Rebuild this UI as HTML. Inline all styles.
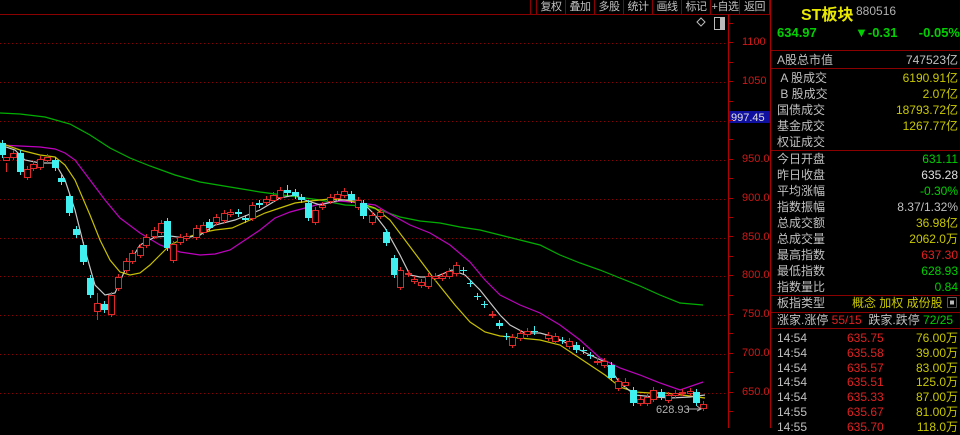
<!DOCTYPE html>
<html><head><meta charset="utf-8"><style>
*{margin:0;padding:0;box-sizing:border-box}
body{width:960px;height:428px;background:#000;overflow:hidden;position:relative;font-family:"Liberation Sans","Noto Sans CJK SC",sans-serif;font-size:12px}
.tb{position:absolute;top:0;height:15px;border-right:1px solid #8b0000;color:#c0c0c0;font-size:11px;line-height:14px;text-align:center;white-space:nowrap;overflow:hidden;letter-spacing:-0.5px}
.ax{position:absolute;left:742px;color:#d01818;font-size:11px}
.p{position:absolute;left:770px;top:0;width:190px;height:428px;border-left:1px solid #a00}
.r{position:absolute;left:6px;right:2px;height:16px;line-height:16px;color:#c0c0c0;white-space:nowrap}
.r .v{position:absolute;right:0;top:0}
.sep{position:absolute;left:0;right:0;border-top:1px solid #8b0000}
.y{color:#c8c800}.g{color:#00d000}.rd{color:#e02020}.w{color:#e0e0e0}
</style></head><body>
<svg width="960" height="428" style="position:absolute;left:0;top:0" id="s">
<line x1="0" y1="14.5" x2="770" y2="14.5" stroke="#8b0000"/>
<line x1="728.5" y1="14" x2="728.5" y2="428" stroke="#b00000"/>
<g id="grid" stroke="#8b0000" stroke-dasharray="1,3"></g>
<g id="lines" fill="none" stroke-width="1.2"></g>
<g id="c"></g>
<rect x="729" y="111" width="41" height="12" fill="#1010a0"/>
<text x="731" y="121" fill="#e0e0e0" font-size="11" font-family="Liberation Sans">997.45</text>
<text x="656" y="413" fill="#b0b0b0" font-size="11" font-family="Liberation Sans">628.93</text>
<line x1="688" y1="409" x2="700" y2="409" stroke="#b0b0b0"/><path d="M697,406 L701,409 L697,411" stroke="#b0b0b0" fill="none"/>
<path d="M697,22 l4,-4 l4,4 l-4,4z" stroke="#bbb" fill="none"/>
<rect x="714.5" y="17.5" width="10" height="12" stroke="#bbb" fill="none"/><rect x="720" y="18" width="4" height="11" fill="#bbb"/>
</svg>
<div class="tb" style="left:530px;width:7px;border-left:1px solid #8b0000"></div>
<div class="tb" style="left:537px;width:29px">复权</div>
<div class="tb" style="left:566px;width:29px">叠加</div>
<div class="tb" style="left:595px;width:29px">多股</div>
<div class="tb" style="left:624px;width:29px">统计</div>
<div class="tb" style="left:653px;width:29px">画线</div>
<div class="tb" style="left:682px;width:29px">标记</div>
<div class="tb" style="left:711px;width:29px">+自选</div>
<div class="tb" style="left:740px;width:30px">返回</div>
<div class="ax" style="top:36px">1100</div>
<div class="ax" style="top:75px">1050</div>
<div class="ax" style="top:153px">950.0</div>
<div class="ax" style="top:192px">900.0</div>
<div class="ax" style="top:231px">850.0</div>
<div class="ax" style="top:269px">800.0</div>
<div class="ax" style="top:308px">750.0</div>
<div class="ax" style="top:347px">700.0</div>
<div class="ax" style="top:386px">650.0</div>
<div class="p">
<div style="position:absolute;left:30px;top:1px;color:#e8e800;font-size:16px;font-weight:bold">ST板块</div>
<div style="position:absolute;left:85px;top:4px;color:#b0b0b0;font-size:12px">880516</div>
<div style="position:absolute;left:6px;top:25px;color:#00d000;font-size:13px;font-weight:bold">634.97</div>
<div style="position:absolute;left:84px;top:25px;color:#00d000;font-size:13px;font-weight:bold">▼-0.31</div>
<div style="position:absolute;right:0;top:25px;color:#00d000;font-size:13px;font-weight:bold">-0.05%</div>
<div class="sep" style="top:50px"></div>
<div class="r" style="top:52px">A股总市值<span class="v">747523亿</span></div>
<div class="sep" style="top:68px"></div>
<div class="r" style="top:70px">&nbsp;A 股成交<span class="v y">6190.91亿</span></div>
<div class="r" style="top:86px">&nbsp;B 股成交<span class="v y">2.07亿</span></div>
<div class="r" style="top:102px">国债成交<span class="v y">18793.72亿</span></div>
<div class="r" style="top:118px">基金成交<span class="v y">1267.77亿</span></div>
<div class="r" style="top:134px">权证成交</div>
<div class="sep" style="top:150px"></div>
<div class="r" style="top:151px">今日开盘<span class="v g">631.11</span></div>
<div class="r" style="top:167px">昨日收盘<span class="v w">635.28</span></div>
<div class="r" style="top:183px">平均涨幅<span class="v g">-0.30%</span></div>
<div class="r" style="top:199px">指数振幅<span class="v">8.37/1.32%</span></div>
<div class="r" style="top:215px">总成交额<span class="v y">36.98亿</span></div>
<div class="r" style="top:231px">总成交量<span class="v y">2062.0万</span></div>
<div class="r" style="top:247px">最高指数<span class="v rd">637.30</span></div>
<div class="r" style="top:263px">最低指数<span class="v g">628.93</span></div>
<div class="r" style="top:279px">指数量比<span class="v g">0.84</span></div>
<div class="sep" style="top:295px"></div>
<div class="r" style="top:295px">板指类型<span class="v y">概念 加权 成份股 <span style="color:#bbb">▣</span></span></div>
<div class="sep" style="top:312px"></div>
<div class="r" style="top:312px;right:0">涨家.涨停 <span class="rd">55/15</span> &nbsp;跌家.跌停 <span class="g">72/25</span></div>
<div class="sep" style="top:328px"></div>
<div id="ticks"></div>
</div>
<script>
var NS="http://www.w3.org/2000/svg";
function el(p,t,a){var e=document.createElementNS(NS,t);for(var k in a)e.setAttribute(k,a[k]);p.appendChild(e);return e}
var g=document.getElementById('grid');
[43,82,121,160,199,238,276,315,354,393].forEach(function(y){el(g,'line',{x1:0,y1:y+.5,x2:728,y2:y+.5})});
for(var y=23;y<428;y+=19.4)el(document.getElementById('s'),'line',{x1:729,y1:Math.round(y)+.5,x2:733,y2:Math.round(y)+.5,stroke:'#b00000'});
var L=document.getElementById('lines');
function pl(c,pts){el(L,'polyline',{stroke:c,points:pts})}
pl('#00b000',"0,113 20,114 45,117 70,124 90,135 110,148 130,158 150,166 175,175 200,182 230,187 260,192 290,196 320,200 345,205 365,206 380,210 400,217 420,221 440,223 460,227 480,230 500,235 520,240 540,245 560,255 580,263 600,270 620,278 640,286 660,295 680,303 703,305");
pl('#c000c0',"0,145 20,146 40,147 55,149 65,153 75,160 90,180 105,200 120,218 140,233 160,245 180,252 200,255 215,254 230,250 245,240 260,230 275,218 290,212 305,208 320,204 340,201 360,203 375,205 390,214 410,225 430,233 450,245 470,262 485,280 500,295 520,305 540,313 560,325 580,340 600,358 620,368 640,375 660,383 680,390 703,382");
pl('#c8c000',"0,143 20,150 40,155 55,157 65,165 75,180 90,215 100,240 110,260 120,272 130,275 140,273 150,265 160,255 170,245 185,238 200,233 215,230 232,228 250,220 265,213 280,208 295,203 310,201 330,199 345,200 360,203 375,208 390,220 405,240 420,260 435,280 455,305 470,322 485,332 500,336 520,338 540,340 560,345 575,355 590,365 605,375 620,387 635,392 650,393 665,393 690,396 705,398");
pl('#c8c8c8',"0,145 15,150 25,160 40,163 55,163 65,180 75,210 85,250 95,285 105,295 115,293 125,270 140,245 155,237 170,236 185,238 200,235 215,225 235,220 260,210 280,198 295,195 305,200 320,205 340,200 355,200 365,205 375,215 385,228 400,255 410,275 420,277 435,277 452,270 465,275 480,290 500,315 510,325 525,333 540,333 555,337 570,345 590,355 605,362 620,383 635,395 655,397 670,398 690,397 705,395");
var C=document.getElementById('c');
var d=[[2,'c',143,155],[6,'r',157,160,172],[13,'r',153,157],[20,'c',153,172],[27,'r',169,177],[33,'r',164,168],[40,'r',159,167],[47,'r',157,160],[55,'c',160,168],[61,'c',178,182],[69,'c',196,213],[76,'c',229,235],[83,'c',245,262],[90,'c',278,295],[97,'r',303,311,293,320],[104,'c',304,310],[111,'r',295,314],[118,'r',277,288],[126,'r',261,270],[132,'r',253,261],[140,'r',247,255],[146,'r',237,245],[154,'r',230,236],[161,'r',223,232],[167,'c',221,248],[173,'r',244,260],[180,'r',237,242],[186,'r',236,238],[196,'r',228,237],[203,'r',225,232],[209,'c',222,228],[216,'r',217,222],[224,'r',213,220],[230,'r',212,214],[238,'c',212,214],[245,'c',218,220],[252,'r',205,218],[259,'c',203,205],[266,'r',199,202],[273,'r',195,200],[280,'r',190,197],[287,'c',190,193,185],[295,'c',192,196],[301,'c',197,200],[308,'c',203,218],[315,'r',210,222],[322,'r',205,207],[330,'r',197,201],[337,'r',194,198],[344,'r',191,195],[351,'c',194,200],[358,'r',200,207],[363,'c',203,216],[372,'r',215,222],[380,'r',212,216],[386,'c',232,243],[394,'c',258,275],[400,'r',270,287],[408,'r',273,274],[414,'r',279,281],[421,'r',282,285],[428,'r',276,286],[435,'r',276,278],[442,'r',276,278],[449,'r',271,276],[456,'r',265,273],[463,'c',270,271],[470,'c',283,284],[477,'c',296,297],[484,'c',304,305],[492,'r',314,315],[499,'c',323,326],[506,'c',336,337],[512,'r',337,345],[520,'r',333,338],[527,'r',331,334],[534,'c',331,332,326],[548,'r',335,338],[555,'r',336,341],[562,'c',340,341],[569,'r',341,346],[576,'c',345,350],[583,'c',350,351],[590,'c',355,356],[597,'r',361,362],[604,'r',361,365],[611,'c',365,378],[618,'r',381,388],[625,'r',382,385,378],[633,'c',390,403],[640,'r',399,403],[647,'r',397,403],[653,'r',390,399],[661,'c',392,397],[668,'r',395,400],[675,'r',393,395],[682,'r',392,393],[690,'r',391,393],[696,'c',392,403],[703,'r',404,408]];
d.forEach(function(a){var x=a[0],col=a[1]=='r'?'#e02828':'#40f0f0',t=a[2],b=a[3],h=a[4]||t-3,l=a[5]||b+3;
el(C,'line',{x1:x+.5,y1:h,x2:x+.5,y2:l,stroke:col});
if(a[1]=='r')el(C,'rect',{x:x-2.5,y:t+.5,width:6,height:Math.max(b-t,1),fill:'#000',stroke:col});
else el(C,'rect',{x:x-3,y:t,width:7,height:Math.max(b-t,1),fill:col});});
var tk=[["14:54","635.75","76.00万"],["14:54","635.58","39.00万"],["14:54","635.57","83.00万"],["14:54","635.51","125.0万"],["14:54","635.33","87.00万"],["14:55","635.67","81.00万"],["14:55","635.70","118.0万"]];
var h='';tk.forEach(function(r,i){h+='<div class="r" style="top:'+(330+i*14.8)+'px">'+r[0]+'<span class="rd" style="position:absolute;left:70px">'+r[1]+'</span><span class="v y">'+r[2]+'</span></div>'});
document.getElementById('ticks').innerHTML=h;
</script>
</body></html>
